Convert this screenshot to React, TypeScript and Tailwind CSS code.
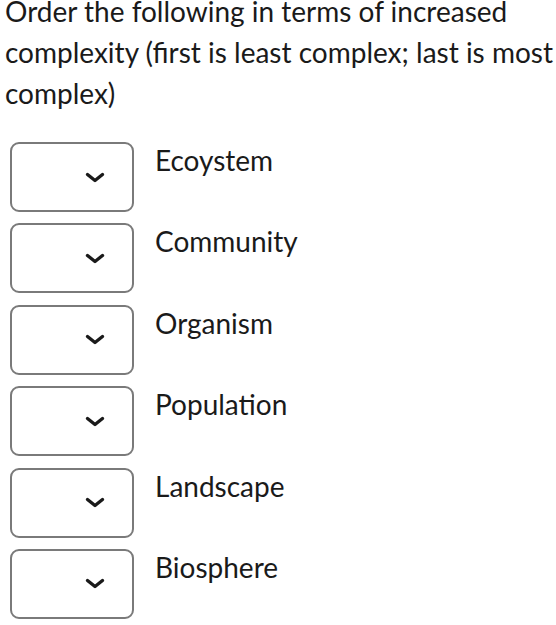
const items = ['Ecoystem', 'Community', 'Organism', 'Population', 'Landscape', 'Biosphere'];

function Chevron() {
    return (
        <svg width="20" height="11" viewBox="0 0 20 11">
            <path d="M2.5 2.5 L10 8.5 L17.5 2.5" fill="none" stroke="#1a1a1a" strokeWidth="3.4" strokeLinecap="round" strokeLinejoin="round" />
        </svg>
    );
}

export default function App() {
    return (
        <div className="bg-white w-[556px] h-[625px] overflow-hidden text-[#1a1a1a]" style={{ fontFamily: 'Lato, "Liberation Sans", sans-serif' }}>
            <p className="pl-[5px] text-[28px] leading-[41px] -mt-[9px] whitespace-nowrap">
                Order the following in terms of increased
                <br />
                complexity (first is least complex; last is most
                <br />
                complex)
            </p>
            <div className="mt-[28px] flex flex-col gap-[11.4px]">
                {items.map((item) => (
                    <div key={item} className="flex items-start">
                        <div className="ml-[10px] w-[124px] h-[70px] border-2 border-[#7a7a7a] rounded-[9px] flex items-center justify-end pr-[27px]">
                            <Chevron />
                        </div>
                        <span className="ml-[21px] mt-[1px] text-[28px] leading-[34px]">{item}</span>
                    </div>
                ))}
            </div>
        </div>
    );
}
